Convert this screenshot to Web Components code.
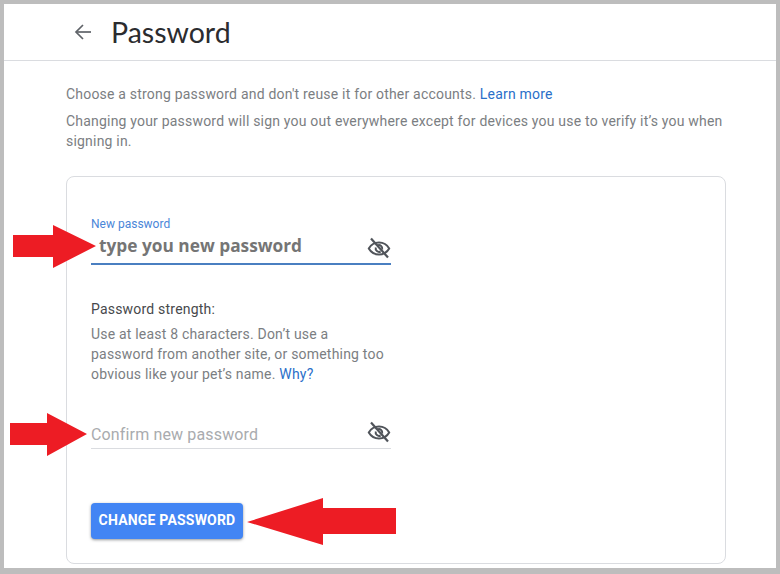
<!DOCTYPE html>
<html lang="en">
<head>
<meta charset="utf-8">
<title>Password</title>
<style>
  html, body { margin: 0; padding: 0; background: #fff; }
</style>
</head>
<body>
<password-page>
  <page-header slot="header">Password</page-header>
  <div slot="intro">Choose a strong password and don't reuse it for other accounts. <a href="#">Learn more</a></div>
  <div slot="intro" class="second">Changing your password will sign you out everywhere except for devices you use to verify it’s you when signing in.</div>
  <form-card slot="card">
    <pw-field label="New password" value="type you new password" active></pw-field>
    <strength-hint>
      <span>Use at least 8 characters. Don’t use a</span>
      <span>password from another site, or something too</span>
      <span>obvious like your pet’s name. <a href="#">Why?</a></span>
    </strength-hint>
    <pw-field placeholder="Confirm new password"></pw-field>
    <action-button>CHANGE PASSWORD</action-button>
  </form-card>
  <call-arrow slot="overlay" points="13,235 53,235 53,225 96,246 53,268 53,257 13,257"></call-arrow>
  <call-arrow slot="overlay" points="10,423 47,423 47,413 87,434 47,456 47,445 10,445"></call-arrow>
  <call-arrow slot="overlay" points="247,522 323,498 323,508 396,508 396,534 323,534 323,545"></call-arrow>
</password-page>

<script>
class PasswordPage extends HTMLElement {
  connectedCallback() {
    this.attachShadow({ mode: 'open' });
    this.shadowRoot.innerHTML = `
      <style>
        :host {
          display: block;
          position: relative;
          width: 780px;
          height: 574px;
          box-sizing: border-box;
          border: solid #bdbdbd;
          border-width: 4px 4px 6px 4px;
          background: #fff;
          overflow: hidden;
          font-family: Roboto, "Liberation Sans", sans-serif;
        }
        .intro {
          padding: 23px 40px 0 62px;
          font-size: 14px;
          line-height: 20px;
          letter-spacing: 0.2px;
          color: #7b7e82;
        }
        ::slotted(.second) { margin-top: 7px; }
        .card-wrap { padding: 25px 50px 0 62px; }
        .overlay { position: absolute; left: -4px; top: -4px; width: 780px; height: 574px; pointer-events: none; }
      </style>
      <slot name="header"></slot>
      <div class="intro"><slot name="intro"></slot></div>
      <div class="card-wrap"><slot name="card"></slot></div>
      <div class="overlay"><slot name="overlay"></slot></div>
    `;
    this.querySelectorAll('a').forEach(a => {
      a.style.color = '#2a6fc9';
      a.style.textDecoration = 'none';
    });
  }
}
customElements.define('password-page', PasswordPage);

class PageHeader extends HTMLElement {
  connectedCallback() {
    this.attachShadow({ mode: 'open' });
    this.shadowRoot.innerHTML = `
      <style>
        :host {
          display: flex;
          align-items: center;
          height: 56px;
          box-sizing: content-box;
          border-bottom: 1px solid #dadce0;
          padding-left: 70px;
        }
        svg { width: 18px; height: 18px; display: block; }
        h1 {
          margin: 0 0 0 19px;
          font: 400 28.5px/36px Lato, "Open Sans", sans-serif;
          color: #2b2c2f;
        }
      </style>
      <svg viewBox="0 0 18 18" fill="none" stroke="#5f6368" stroke-width="1.7">
        <path d="M17 9H2"/>
        <path d="M9 2 2 9l7 7"/>
      </svg>
      <h1><slot></slot></h1>
    `;
  }
}
customElements.define('page-header', PageHeader);

class FormCard extends HTMLElement {
  connectedCallback() {
    this.attachShadow({ mode: 'open' });
    this.shadowRoot.innerHTML = `
      <style>
        :host {
          display: block;
          width: 660px;
          height: 388px;
          box-sizing: border-box;
          border: 1px solid #dadce0;
          border-radius: 8px;
          padding: 39px 24px 0 24px;
        }
      </style>
      <slot></slot>
    `;
  }
}
customElements.define('form-card', FormCard);

class PwField extends HTMLElement {
  connectedCallback() {
    const label = this.getAttribute('label');
    const value = this.getAttribute('value');
    const placeholder = this.getAttribute('placeholder');
    const active = this.hasAttribute('active');
    this.attachShadow({ mode: 'open' });
    this.shadowRoot.innerHTML = `
      <style>
        :host {
          display: block;
          width: 300px;
          font-family: Roboto, "Liberation Sans", sans-serif;
        }
        .label { font-size: 12px; line-height: 16px; height: 16px; color: #4a86d8; }
        .row {
          display: flex;
          align-items: center;
          justify-content: space-between;
          box-sizing: border-box;
          height: ${active ? '33px' : '32px'};
          border-bottom: ${active ? '2px solid #4a7fc1' : '1px solid #dadce0'};
        }
        .value {
          font: 700 17.3px/24px "Open Sans", sans-serif;
          color: #757575;
          padding: 0 0 4px 8px;
        }
        .placeholder { font-size: 16px; line-height: 24px; letter-spacing: 0.15px; color: #a9abae; padding-top: 4px; }
        svg { width: 24px; height: 24px; display: block; ${active ? '' : 'margin-top: -2px;'} }
      </style>
      ${label ? `<div class="label">${label}</div>` : ''}
      <div class="row">
        ${value ? `<span class="value">${value}</span>` : `<span class="placeholder">${placeholder}</span>`}
        <svg viewBox="0 0 24 24" fill="none" stroke="#50545a" stroke-width="2">
          <path d="M1.8 12.500C4 8.600 7.600 6.500 12 6.500s8 2.100 10.200 6c-2.200 3.900-5.800 6-10.200 6s-8-2.100-10.200-6Z"/>
          <path d="M8.800 11.500a3.400 3.400 0 0 0 4.800 4M15.200 13.500a3.400 3.400 0 0 0-4.800-4"/>
          <path d="M4 2.500 21 21.500" stroke-width="2.200"/>
        </svg>
      </div>
    `;
  }
}
customElements.define('pw-field', PwField);

class StrengthHint extends HTMLElement {
  connectedCallback() {
    this.attachShadow({ mode: 'open' });
    this.shadowRoot.innerHTML = `
      <style>
        :host {
          display: block;
          width: 300px;
          margin: 34px 0 33px 0;
          font-family: Roboto, "Liberation Sans", sans-serif;
          font-size: 14px;
          line-height: 20px;
          letter-spacing: 0.2px;
          color: #7b7e82;
        }
        .title { color: #47494c; margin-bottom: 5px; }
        ::slotted(span) { display: block; white-space: nowrap; }
      </style>
      <div class="title">Password strength:</div>
      <slot></slot>
    `;
    this.querySelectorAll('a').forEach(a => {
      a.style.color = '#2a6fc9';
      a.style.textDecoration = 'none';
    });
  }
}
customElements.define('strength-hint', StrengthHint);

class ActionButton extends HTMLElement {
  connectedCallback() {
    this.attachShadow({ mode: 'open' });
    this.shadowRoot.innerHTML = `
      <style>
        :host { display: block; margin-top: 54px; }
        button {
          display: block;
          width: 152px;
          height: 36px;
          padding: 0 0 2px 0;
          border: 0;
          border-radius: 4px;
          background: #4285f4;
          color: #fff;
          font: 700 14px/34px Roboto, "Liberation Sans", sans-serif;
          letter-spacing: 0.2px;
          box-shadow: 0 1px 3px rgba(60, 64, 67, 0.55);
        }
      </style>
      <button type="button"><slot></slot></button>
    `;
  }
}
customElements.define('action-button', ActionButton);

// red callouts drawn over the screenshot, coordinates are page pixels
class CallArrow extends HTMLElement {
  connectedCallback() {
    this.attachShadow({ mode: 'open' });
    this.shadowRoot.innerHTML = `
      <style>
        :host { position: absolute; left: 0; top: 0; width: 780px; height: 574px; display: block; }
        svg { display: block; }
      </style>
      <svg width="780" height="574" viewBox="0 0 780 574">
        <polygon points="${this.getAttribute('points')}" fill="#ed1c24"/>
      </svg>
    `;
  }
}
customElements.define('call-arrow', CallArrow);
</script>
</body>
</html>
